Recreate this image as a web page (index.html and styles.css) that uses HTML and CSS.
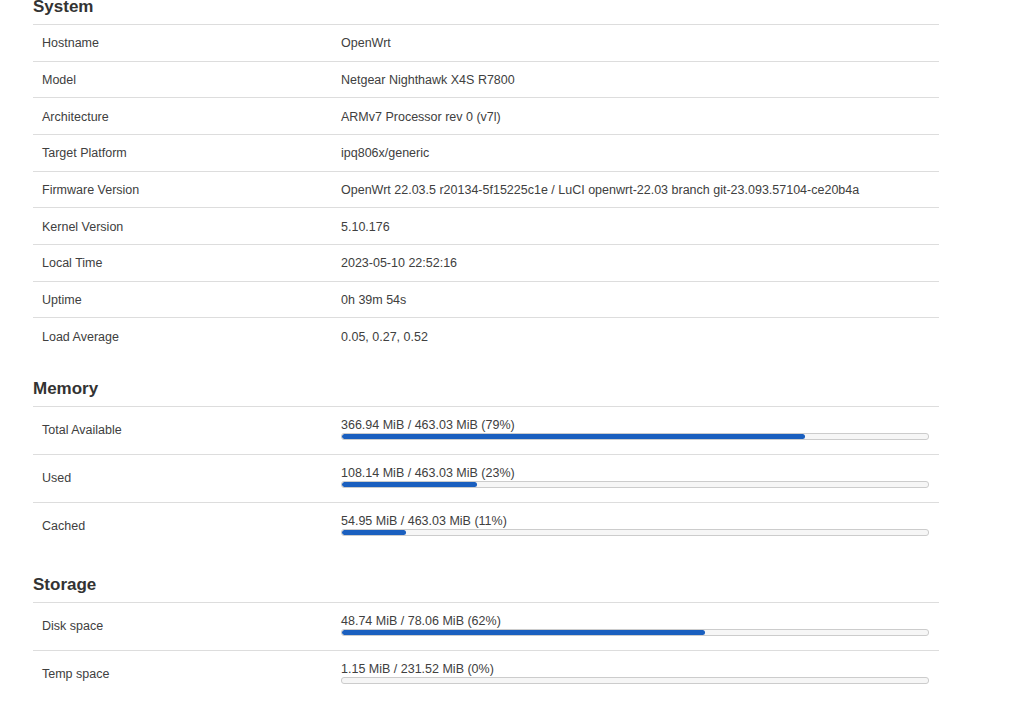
FILE: index.html
```html
<!DOCTYPE html>
<html lang="en">
<head>
  <meta charset="UTF-8" />
  <title>Status - Overview</title>
  <link rel="stylesheet" href="styles.css">
</head>
<body>
  <div class="main">

    <!-- System -->
    <div class="cbi-section first">
      <h3>System</h3>
      <div class="table">
        <div class="tr"><div class="td left">Hostname</div><div class="td">OpenWrt</div></div>
        <div class="tr"><div class="td left">Model</div><div class="td">Netgear Nighthawk X4S R7800</div></div>
        <div class="tr"><div class="td left">Architecture</div><div class="td">ARMv7 Processor rev 0 (v7l)</div></div>
        <div class="tr"><div class="td left">Target Platform</div><div class="td">ipq806x/generic</div></div>
        <div class="tr"><div class="td left">Firmware Version</div><div class="td">OpenWrt 22.03.5 r20134-5f15225c1e / LuCI openwrt-22.03 branch git-23.093.57104-ce20b4a</div></div>
        <div class="tr"><div class="td left">Kernel Version</div><div class="td">5.10.176</div></div>
        <div class="tr"><div class="td left">Local Time</div><div class="td">2023-05-10 22:52:16</div></div>
        <div class="tr"><div class="td left">Uptime</div><div class="td">0h 39m 54s</div></div>
        <div class="tr"><div class="td left">Load Average</div><div class="td">0.05, 0.27, 0.52</div></div>
      </div>
    </div>

    <!-- Memory -->
    <div class="cbi-section">
      <h3>Memory</h3>
      <div class="table bars">
        <div class="tr">
          <div class="td left">Total Available</div>
          <div class="td">
            <div class="bar-title">366.94 MiB / 463.03 MiB (79%)</div>
            <div class="cbi-progressbar"><div class="fill" style="width: 79%"></div></div>
          </div>
        </div>
        <div class="tr">
          <div class="td left">Used</div>
          <div class="td">
            <div class="bar-title">108.14 MiB / 463.03 MiB (23%)</div>
            <div class="cbi-progressbar"><div class="fill" style="width: 23%"></div></div>
          </div>
        </div>
        <div class="tr">
          <div class="td left">Cached</div>
          <div class="td">
            <div class="bar-title">54.95 MiB / 463.03 MiB (11%)</div>
            <div class="cbi-progressbar"><div class="fill" style="width: 11%"></div></div>
          </div>
        </div>
      </div>
    </div>

    <!-- Storage -->
    <div class="cbi-section">
      <h3>Storage</h3>
      <div class="table bars">
        <div class="tr">
          <div class="td left">Disk space</div>
          <div class="td">
            <div class="bar-title">48.74 MiB / 78.06 MiB (62%)</div>
            <div class="cbi-progressbar"><div class="fill" style="width: 62%"></div></div>
          </div>
        </div>
        <div class="tr">
          <div class="td left">Temp space</div>
          <div class="td">
            <div class="bar-title">1.15 MiB / 231.52 MiB (0%)</div>
            <div class="cbi-progressbar"><div class="fill" style="width: 0%"></div></div>
          </div>
        </div>
      </div>
    </div>

  </div>
</body>
</html>
```

FILE: styles.css
```css
body {
  margin: 0;
  font-family: 'Liberation Sans', Arial, sans-serif;
  font-size: 12.5px;
  line-height: 17px;
  color: #404040;
  background-color: #fff;
}
.main {
  width: 906px;
  margin-left: 33px;
}
h3 {
  margin: 0 0 7px;
  padding-top: 1px;
  font-size: 17px;
  line-height: 20px;
  font-weight: bold;
  color: #333;
}
.cbi-section {
  margin-bottom: 24px;
}
.cbi-section.first {
  margin-top: -4px;
}
.tr {
  display: grid;
  grid-template-columns: 299px 1fr;
  border-top: 1px solid #ddd;
}
.td {
  padding: 10.33px 10px 8.33px 9px;
}
.bars .tr {
  height: 48px;
  box-sizing: border-box;
}
.bars .td {
  padding-top: 11px;
  padding-bottom: 0;
}
.bars .td.left {
  padding-top: 1px;
  align-self: center;
}
.bar-title {
  line-height: 15px;
}
/* ▼ プログレスバー */
.cbi-progressbar {
  height: 5px;
  border: 1px solid #ccc;
  border-radius: 3px;
  background-color: #f6f6f6;
  overflow: hidden;
}
.cbi-progressbar .fill {
  height: 100%;
  background-color: #1a5fbf;
  border-radius: 3px;
}
```
